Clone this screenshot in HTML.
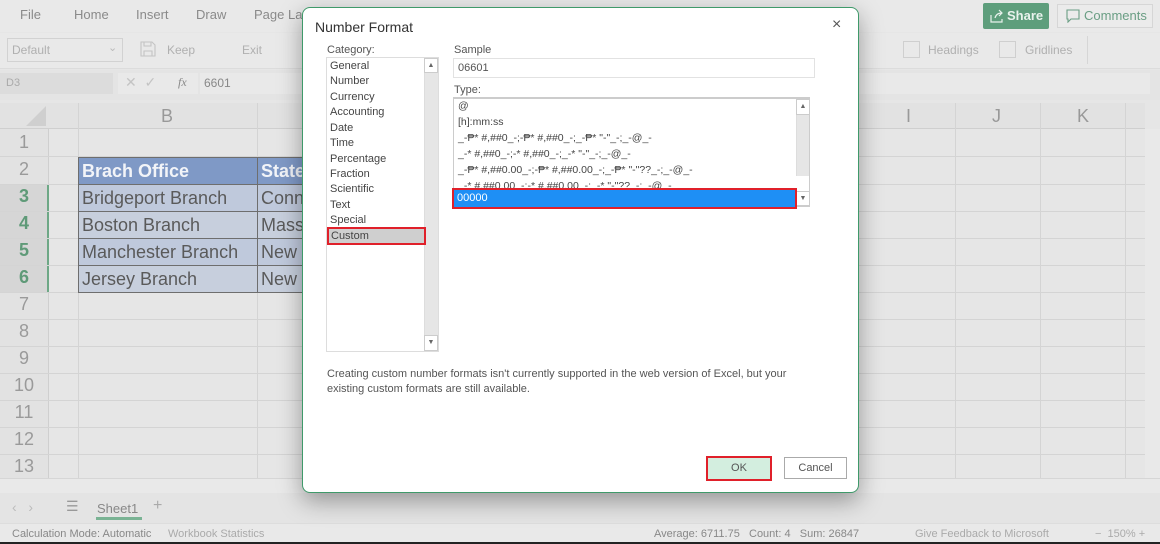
<!DOCTYPE html>
<html><head><meta charset="utf-8"><style>
*{box-sizing:border-box;margin:0;padding:0}
body{width:1160px;height:544px;overflow:hidden;background:#e6e6e6;font-family:"Liberation Sans",sans-serif;position:relative;color:#9a9a9a}
.a{position:absolute;white-space:nowrap}
.hl{position:absolute;height:1px;background:#d4d4d4}
.vl{position:absolute;width:1px;background:#d4d4d4}
.rn{position:absolute;left:0;width:48px;text-align:center;font-size:18px;color:#9a9a9a}
.cell{position:absolute;border:1px solid #6e6e6e;font-size:18px;color:#5a5a5a;padding-left:3px;line-height:26px;overflow:hidden}
.dlg{position:absolute;left:302px;top:7px;width:557px;height:486px;background:#fff;border:1px solid #3f9a6a;border-radius:8px;box-shadow:0 8px 24px rgba(0,0,0,.35);font-family:"Liberation Sans",sans-serif;color:#444}
.cat{position:absolute;left:3px;font-size:11px;color:#444}
.ty{position:absolute;left:4px;font-size:10.5px;color:#444}
</style></head><body>
<!-- menu -->
<div class="a" style="left:0;top:0;width:1160px;height:32px;background:#e9e9e9"></div>
<div class="a" style="left:20px;top:7px;font-size:13px;color:#8a8a8a">File</div>
<div class="a" style="left:74px;top:7px;font-size:13px;color:#8a8a8a">Home</div>
<div class="a" style="left:136px;top:7px;font-size:13px;color:#8a8a8a">Insert</div>
<div class="a" style="left:196px;top:7px;font-size:13px;color:#8a8a8a">Draw</div>
<div class="a" style="left:254px;top:7px;font-size:13px;color:#8a8a8a">Page Layout</div>
<div class="a" style="left:983px;top:3px;width:66px;height:26px;background:#5e9e7c;border-radius:2px;color:#e8f2ec;font-size:13px;font-weight:bold;line-height:26px;padding-left:24px">Share</div>
<svg class="a" style="left:990px;top:9px" width="14" height="14" viewBox="0 0 14 14"><path d="M1 6v7h11v-3M5 9c1-4 4-5 7-5M9 1l3 3-3 3" fill="none" stroke="#e8f2ec" stroke-width="1.2"/></svg>
<div class="a" style="left:1057px;top:4px;width:96px;height:24px;border:1px solid #d6d6d6;background:#ebebeb;color:#6a9e84;font-size:13px;line-height:22px;padding-left:26px">Comments</div>
<svg class="a" style="left:1066px;top:9px" width="14" height="14" viewBox="0 0 14 14"><path d="M1 1h12v9H5l-3 3v-3H1z" fill="none" stroke="#6a9e84" stroke-width="1.1"/></svg>
<!-- toolbar -->
<div class="a" style="left:0;top:33px;width:1160px;height:36px;background:#e9e9e9;border-bottom:1px solid #dcdcdc"></div>
<div class="a" style="left:7px;top:38px;width:116px;height:24px;border:1px solid #d2d2d2;font-size:12px;line-height:22px;padding-left:4px;color:#b0b0b0">Default</div>
<div class="a" style="left:108px;top:41px;font-size:11px;color:#bbb">⌄</div>
<svg class="a" style="left:140px;top:41px" width="16" height="16" viewBox="0 0 16 16"><path d="M1 1h11l3 3v11H1zM4 1v4h7V1M4 15v-5h8v5" fill="none" stroke="#c4c4c4" stroke-width="1.1"/></svg>
<div class="a" style="left:167px;top:43px;font-size:12px;color:#b0b0b0">Keep</div>
<div class="a" style="left:242px;top:43px;font-size:12px;color:#b0b0b0">Exit</div>
<div class="a" style="left:903px;top:41px;width:17px;height:17px;border:1px solid #cfcfcf"></div>
<div class="a" style="left:928px;top:43px;font-size:12px;color:#b0b0b0">Headings</div>
<div class="a" style="left:999px;top:41px;width:17px;height:17px;border:1px solid #cfcfcf"></div>
<div class="a" style="left:1025px;top:43px;font-size:12px;color:#b0b0b0">Gridlines</div>
<div class="a" style="left:1087px;top:36px;width:1px;height:28px;background:#d6d6d6"></div>
<!-- formula bar -->
<div class="a" style="left:0;top:70px;width:1160px;height:30px;background:#e4e4e4"></div>
<div class="a" style="left:0;top:73px;width:113px;height:21px;background:#dcdcdc;font-size:11px;color:#aaa;padding:4px 6px">D3</div>
<div class="a" style="left:118px;top:73px;width:80px;height:21px;background:#e9e9e9"></div>
<div class="a" style="left:125px;top:74px;font-size:14px;color:#c4c4c4">✕ &nbsp;✓</div>
<div class="a" style="left:178px;top:75px;font-size:12px;font-style:italic;color:#888;font-family:'Liberation Serif',serif">fx</div>
<div class="a" style="left:200px;top:73px;width:950px;height:21px;background:#e9e9e9;font-size:12px;padding:3px 4px;color:#888">6601</div>
<!-- grid -->
<div class="a" style="left:0;top:103px;width:1145px;height:26px;background:#e2e2e2;border-bottom:1px solid #cfcfcf"></div>
<div class="a" style="left:0;top:129px;width:49px;height:353px;background:#e2e2e2;border-right:1px solid #cfcfcf"></div>
<div class="a" style="left:0;top:184px;width:49px;height:108px;background:#d6d6d6;border-right:2px solid #6ea886"></div>
<svg class="a" style="left:26px;top:106px" width="20" height="20"><path d="M20 0v20H0z" fill="#cfcfcf"/></svg>
<div class="a" style="left:161px;top:106px;font-size:18px;color:#999">B</div>
<div class="a" style="left:906px;top:106px;font-size:18px;color:#999">I</div>
<div class="a" style="left:992px;top:106px;font-size:18px;color:#999">J</div>
<div class="a" style="left:1077px;top:106px;font-size:18px;color:#999">K</div>
<div class="vl" style="left:78px;top:103px;height:379px"></div>
<div class="vl" style="left:257px;top:103px;height:379px"></div>
<div class="vl" style="left:955px;top:103px;height:379px"></div>
<div class="vl" style="left:1040px;top:103px;height:379px"></div>
<div class="vl" style="left:1125px;top:103px;height:379px"></div>
<div class="hl" style="left:0;top:156px;width:1145px"></div>
<div class="hl" style="left:0;top:184px;width:1145px"></div>
<div class="hl" style="left:0;top:211px;width:1145px"></div>
<div class="hl" style="left:0;top:238px;width:1145px"></div>
<div class="hl" style="left:0;top:265px;width:1145px"></div>
<div class="hl" style="left:0;top:292px;width:1145px"></div>
<div class="hl" style="left:0;top:319px;width:1145px"></div>
<div class="hl" style="left:0;top:346px;width:1145px"></div>
<div class="hl" style="left:0;top:373px;width:1145px"></div>
<div class="hl" style="left:0;top:400px;width:1145px"></div>
<div class="hl" style="left:0;top:427px;width:1145px"></div>
<div class="hl" style="left:0;top:454px;width:1145px"></div>
<div class="rn" style="top:132px">1</div>
<div class="rn" style="top:159px">2</div>
<div class="rn" style="top:186px;color:#5f9a78;font-weight:bold">3</div>
<div class="rn" style="top:213px;color:#5f9a78;font-weight:bold">4</div>
<div class="rn" style="top:240px;color:#5f9a78;font-weight:bold">5</div>
<div class="rn" style="top:267px;color:#5f9a78;font-weight:bold">6</div>
<div class="rn" style="top:294px">7</div>
<div class="rn" style="top:321px">8</div>
<div class="rn" style="top:348px">9</div>
<div class="rn" style="top:375px">10</div>
<div class="rn" style="top:402px">11</div>
<div class="rn" style="top:429px">12</div>
<div class="rn" style="top:456px">13</div>
<div class="cell" style="left:78px;top:157px;width:180px;height:28px;background:#7f99c6;color:#f2f4f8;font-weight:bold">Brach Office</div>
<div class="cell" style="left:257px;top:157px;width:60px;height:28px;background:#7f99c6;color:#f2f4f8;font-weight:bold">State</div>
<div class="cell" style="left:78px;top:184px;width:180px;height:28px;background:#bfc9dc">Bridgeport Branch</div>
<div class="cell" style="left:257px;top:184px;width:60px;height:28px;background:#bfc9dc">Conn</div>
<div class="cell" style="left:78px;top:211px;width:180px;height:28px;background:#c7cfdd">Boston Branch</div>
<div class="cell" style="left:257px;top:211px;width:60px;height:28px;background:#c7cfdd">Mass</div>
<div class="cell" style="left:78px;top:238px;width:180px;height:28px;background:#bfc9dc">Manchester Branch</div>
<div class="cell" style="left:257px;top:238px;width:60px;height:28px;background:#bfc9dc">New</div>
<div class="cell" style="left:78px;top:265px;width:180px;height:28px;background:#c7cfdd">Jersey Branch</div>
<div class="cell" style="left:257px;top:265px;width:60px;height:28px;background:#c7cfdd">New</div>
<div class="a" style="left:1145px;top:129px;width:15px;height:353px;background:#e9e9e9"></div>
<!-- hscroll -->
<div class="a" style="left:0;top:478px;width:1160px;height:15px;background:#e9e9e9;border-top:1px solid #d6d6d6"></div>
<!-- tabs -->
<div class="a" style="left:0;top:493px;width:1160px;height:30px;background:#e4e4e4"></div>
<div class="a" style="left:12px;top:499px;font-size:14px;color:#bbb">‹ &nbsp; ›</div>
<div class="a" style="left:66px;top:498px;font-size:14px;color:#999">☰</div>
<div class="a" style="left:97px;top:501px;font-size:13px;color:#888">Sheet1</div>
<div class="a" style="left:96px;top:517px;width:46px;height:3px;background:#7ab394"></div>
<div class="a" style="left:153px;top:497px;font-size:16px;color:#aaa">+</div>
<!-- status -->
<div class="a" style="left:0;top:523px;width:1160px;height:21px;background:#e9e9e9;border-top:1px solid #ddd"></div>
<div class="a" style="left:12px;top:528px;font-size:11px;color:#888">Calculation Mode: Automatic</div>
<div class="a" style="left:168px;top:528px;font-size:11px;color:#aaa">Workbook Statistics</div>
<div class="a" style="left:654px;top:528px;font-size:11px;color:#888">Average: 6711.75 &nbsp; Count: 4 &nbsp; Sum: 26847</div>
<div class="a" style="left:915px;top:528px;font-size:11px;color:#aaa">Give Feedback to Microsoft</div>
<div class="a" style="left:1095px;top:528px;font-size:11px;color:#aaa">−&nbsp;&nbsp;150%&nbsp;+</div>
<div class="a" style="left:0;top:542px;width:1160px;height:2px;background:#222"></div>

<!-- dialog -->
<div class="dlg">
<div class="a" style="left:12px;top:11px;font-size:14px;color:#333">Number Format</div>
<div class="a" style="left:529px;top:8px;font-size:16px;color:#555">×</div>
<div class="a" style="left:24px;top:36px;font-size:11px;color:#555">Category:</div>
<div class="a" style="left:23px;top:49px;width:113px;height:295px;border:1px solid #ddd"></div>
<div class="a" style="left:121px;top:50px;width:14px;height:293px;background:#e6e6e6;border-left:1px solid #ddd"></div>
<div class="a" style="left:121px;top:50px;width:14px;height:15px;background:#fff;border:1px solid #ccc;font-size:7px;text-align:center;line-height:13px;color:#666">▲</div>
<div class="a" style="left:121px;top:327px;width:14px;height:16px;background:#fff;border:1px solid #ccc;font-size:7px;text-align:center;line-height:14px;color:#666">▼</div>
<div class="a" style="left:24px;top:51px;width:97px;height:240px">
<div class="cat" style="top:1px">General</div>
<div class="cat" style="top:16px">Number</div>
<div class="cat" style="top:32px">Currency</div>
<div class="cat" style="top:47px">Accounting</div>
<div class="cat" style="top:63px">Date</div>
<div class="cat" style="top:78px">Time</div>
<div class="cat" style="top:94px">Percentage</div>
<div class="cat" style="top:109px">Fraction</div>
<div class="cat" style="top:124px">Scientific</div>
<div class="cat" style="top:140px">Text</div>
<div class="cat" style="top:155px">Special</div>
</div>
<div class="a" style="left:24px;top:219px;width:99px;height:18px;background:#cfcfcf;border:2px solid #e0202a;font-size:11px;color:#444;padding-left:2px;line-height:14px">Custom</div>

<div class="a" style="left:151px;top:36px;font-size:11px;color:#555">Sample</div>
<div class="a" style="left:150px;top:50px;width:362px;height:20px;border:1px solid #e2e2e2;font-size:11px;padding:3px 4px;color:#555">06601</div>
<div class="a" style="left:151px;top:76px;font-size:11px;color:#555">Type:</div>
<div class="a" style="left:150px;top:89px;width:357px;height:110px;border:1px solid #ccc;border-top:2px solid #ccc;overflow:hidden">
<div class="ty" style="top:1px">@</div>
<div class="ty" style="top:17px">[h]:mm:ss</div>
<div class="ty" style="top:33px">_-₱* #,##0_-;-₱* #,##0_-;_-₱* "-"_-;_-@_-</div>
<div class="ty" style="top:49px">_-* #,##0_-;-* #,##0_-;_-* "-"_-;_-@_-</div>
<div class="ty" style="top:65px">_-₱* #,##0.00_-;-₱* #,##0.00_-;_-₱* "-"??_-;_-@_-</div>
<div class="ty" style="top:81px">_-* #,##0.00_-;-* #,##0.00_-;_-* "-"??_-;_-@_-</div>
<div class="a" style="left:342px;top:0;width:14px;height:108px;background:#e6e6e6;border-left:1px solid #ddd"></div>
<div class="a" style="left:342px;top:0;width:14px;height:16px;background:#fff;border:1px solid #ccc;font-size:7px;text-align:center;line-height:14px;color:#666">▲</div>
<div class="a" style="left:342px;top:77px;width:14px;height:15px;background:#fff"></div>
<div class="a" style="left:342px;top:92px;width:14px;height:15px;background:#fff;border:1px solid #ccc;font-size:7px;text-align:center;line-height:13px;color:#666">▼</div>
</div>
<div class="a" style="left:149px;top:180px;width:345px;height:21px;background:#1e8ff5;border:2px solid #e0202a;font-size:11px;color:#fff;padding-left:3px;line-height:17px">00000</div>

<div class="a" style="left:24px;top:359px;font-size:11px;color:#555;line-height:15px;white-space:normal;width:480px">Creating custom number formats isn't currently supported in the web version of Excel, but your existing custom formats are still available.</div>

<div class="a" style="left:403px;top:448px;width:66px;height:25px;background:#d3eedf;border:2px solid #e0202a;font-size:11px;color:#555;text-align:center;line-height:21px">OK</div>
<div class="a" style="left:481px;top:449px;width:63px;height:22px;border:1px solid #aaa;font-size:11px;color:#555;text-align:center;line-height:20px">Cancel</div>
</div>
</body></html>
